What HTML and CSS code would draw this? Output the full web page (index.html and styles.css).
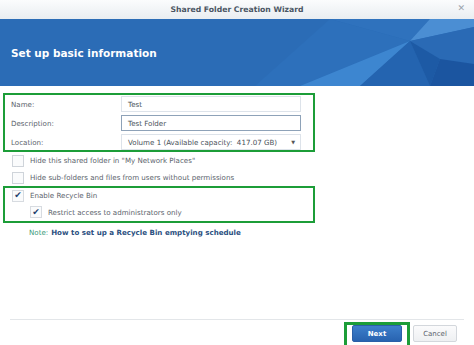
FILE: index.html
```html
<!DOCTYPE html>
<html>
<head>
    <title>Shared Folder Creation Wizard</title>
    <link rel="stylesheet" href="styles.css">
</head>
<body>
    <div class="wizard">
        <div class="titlebar">
            <span class="title">Shared Folder Creation Wizard</span>
            <span class="close">&#x2715;</span>
        </div>

        <div class="banner">
            <svg class="poly" width="474" height="67" viewBox="0 0 474 67">
                <polygon points="250,0 474,0 474,8 410,22 330,0" fill="#2f72bd"/>
                <polygon points="330,0 410,22 300,67 255,67" fill="#2d70bb"/>
                <polygon points="410,22 474,8 474,0 430,0" fill="#4b8ed3"/>
                <polygon points="410,22 300,67 360,67" fill="#3d86d0"/>
                <polygon points="410,22 360,67 430,67" fill="#2464b0"/>
                <polygon points="410,22 474,8 474,45 440,40" fill="#2a6ab5"/>
                <polygon points="410,22 440,40 430,67" fill="#1d5aa5"/>
                <polygon points="440,40 474,45 474,67 430,67" fill="#1b55a0"/>
            </svg>
            <h1>Set up basic information</h1>
        </div>

        <div class="content">
            <div class="hl fields">
                <div class="row">
                    <label>Name:</label>
                    <div class="input">Test</div>
                </div>
                <div class="row">
                    <label>Description:</label>
                    <div class="input focus">Test Folder</div>
                </div>
                <div class="row">
                    <label>Location:</label>
                    <div class="input select">
                        <span>Volume 1 (Available capacity:&nbsp; 417.07 GB)</span>
                        <span class="arrow">&#9660;</span>
                    </div>
                </div>
            </div>

            <div class="check"><span class="box"></span>Hide this shared folder in "My Network Places"</div>
            <div class="check"><span class="box"></span>Hide sub-folders and files from users without permissions</div>

            <div class="hl recycle">
                <div class="check first"><span class="box on">&#10004;</span>Enable Recycle Bin</div>
                <div class="check sub"><span class="box on">&#10004;</span>Restrict access to administrators only</div>
            </div>

            <div class="note"><span class="note-label">Note:</span> How to set up a Recycle Bin emptying schedule</div>
        </div>

        <div class="footer">
            <div class="hl next-wrap"><button class="btn primary">Next</button></div>
            <button class="btn">Cancel</button>
        </div>
    </div>
</body>
</html>
```

FILE: styles.css
```css
body { margin: 0; background: #fff; font-family: "DejaVu Sans", Verdana, sans-serif; }
.wizard { width: 474px; height: 345px; overflow: hidden; display: flex; flex-direction: column; }

.titlebar { height: 19px; display: flex; align-items: center; justify-content: center; position: relative; background: linear-gradient(#fbfcfd, #e9edf1); }
.title { font-size: 7.7px; font-weight: bold; color: #4a5563; }
.close { position: absolute; right: 9px; top: 3px; font-size: 9px; color: #9aa3ad; }

.banner { height: 67px; background: #2b6cb6; position: relative; display: flex; align-items: center; }
.poly { position: absolute; left: 0; top: 0; }
.banner h1 { position: relative; margin: 0 0 0 11px; font-size: 10.5px; color: #fff; }

.content { padding: 7px 0 0 3px; font-size: 7.1px; color: #5b636c; }
.hl { border: 2px solid #1c9d38; }
.fields { width: 308px; padding: 1px 0 0 0; }
.row { display: flex; align-items: center; height: 16px; margin-bottom: 3px; }
.row:last-child { margin-bottom: 0; }
.row label { width: 110px; padding-left: 6px; }
.input { width: 172px; height: 14px; border: 1px solid #dde3ea; display: flex; align-items: center; padding-left: 6px; color: #4a525a; white-space: nowrap; }
.input.focus { border-color: #8ea2b8; }
.select { justify-content: space-between; }
.arrow { font-size: 5px; margin-right: 5px; color: #555; }

.check { display: flex; align-items: center; height: 17px; padding-left: 9px; }
.box { width: 10px; height: 10px; border: 1px solid #cfd4da; background: #fafbfc; margin-right: 6px; display: flex; align-items: center; justify-content: center; font-size: 9px; color: #233f6e; line-height: 1; }
.box.on { border-color: #d7dbe0; }
.recycle { width: 308px; }
.recycle .check { padding-left: 7px; }
.recycle .check.first { height: 15px; }
.recycle .check.sub { padding-left: 25px; height: 18px; }
.note { padding-left: 26px; margin-top: 2px; height: 14px; display: flex; align-items: center; font-weight: bold; color: #2b4f80; }
.note-label { color: #3a9a7a; font-weight: normal; margin-right: 3px; }

.footer { margin-top: auto; margin-left: 10px; margin-right: 10px; border-top: 1px solid #e3e6e9; height: 25px; display: flex; align-items: flex-start; justify-content: flex-end; padding-right: 7px; gap: 3px; }
.next-wrap { display: flex; border-width: 3px; padding: 0 5px; margin-top: 2px; height: 22px; }
.btn { font-family: inherit; font-size: 7px; height: 17px; border-radius: 2px; border: 1px solid #d3d7dc; background: linear-gradient(#fbfbfc, #eef0f2); color: #5a626b; padding: 0; width: 44px; margin-top: 5px; }
.btn.primary { width: 50px; margin-top: 0; color: #fff; font-weight: bold; border-color: #2a5fa8; background: linear-gradient(#3d7fcb, #2863b0); }
```
